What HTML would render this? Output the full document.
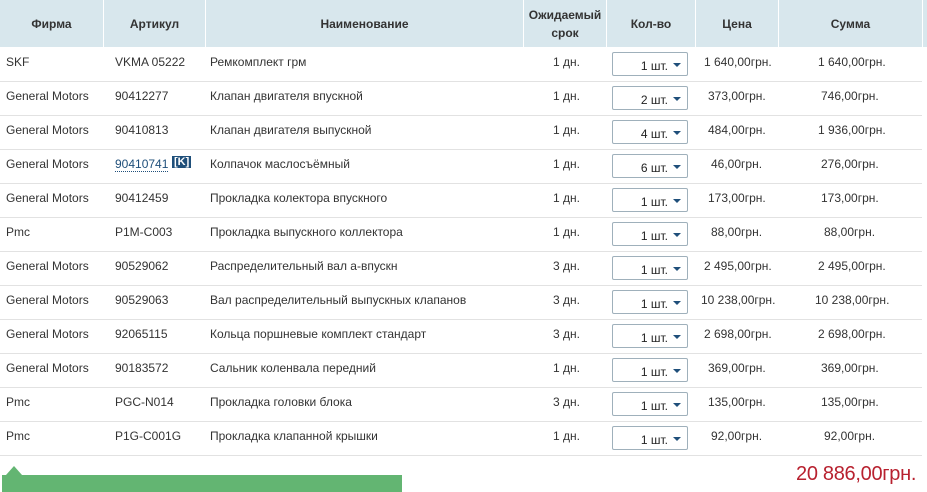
<!DOCTYPE html>
<html><head><meta charset="utf-8"><style>
*{margin:0;padding:0;box-sizing:border-box}
body{width:927px;height:492px;background:#fff;font-family:"Liberation Sans",Arial,sans-serif;font-size:12px;color:#333;position:relative;overflow:hidden}
.hdr{position:absolute;left:0;top:0;width:927px;height:47px;background:#d8e7ed}
.hc{position:absolute;top:0;height:47px;display:flex;align-items:center;justify-content:center;text-align:center;font-weight:bold;color:#333;line-height:18px;border-right:1px solid #fff}
.row{position:absolute;left:0;width:922px;height:34px;border-bottom:1px solid #e2e2e2}
.c{position:absolute;top:7px;white-space:nowrap}
.sel{position:absolute;left:612px;top:4px;width:76px;height:24px;border:1px solid #9fb0bb;border-radius:2px;background:#fff}
.sel span{position:absolute;right:19px;top:6px;color:#222}
.sel i{position:absolute;right:6px;top:10px;width:0;height:0;border-left:4px solid transparent;border-right:4px solid transparent;border-top:4px solid #1f4f7a}
</style></head><body>
<div class="hdr">
<div class="hc" style="left:0;width:104px">Фирма</div>
<div class="hc" style="left:104px;width:102px">Артикул</div>
<div class="hc" style="left:206px;width:318px">Наименование</div>
<div class="hc" style="left:524px;width:83px">Ожидаемый<br>срок</div>
<div class="hc" style="left:607px;width:89px">Кол-во</div>
<div class="hc" style="left:696px;width:83px">Цена</div>
<div class="hc" style="left:779px;width:144px">Сумма</div>
</div>
<div class="row" style="top:48px"><span class="c" style="left:6px">SKF</span><span class="c" style="left:115px">VKMA 05222</span><span class="c" style="left:210px">Ремкомплект грм</span><span class="c" style="left:553px">1 дн.</span><div class="sel"><span>1 шт.</span><i></i></div><span class="c" style="left:704px">1 640,00грн.</span><span class="c" style="left:818px">1 640,00грн.</span></div>
<div class="row" style="top:82px"><span class="c" style="left:6px">General Motors</span><span class="c" style="left:115px">90412277</span><span class="c" style="left:210px">Клапан двигателя впускной</span><span class="c" style="left:553px">1 дн.</span><div class="sel"><span>2 шт.</span><i></i></div><span class="c" style="left:708px">373,00грн.</span><span class="c" style="left:821px">746,00грн.</span></div>
<div class="row" style="top:116px"><span class="c" style="left:6px">General Motors</span><span class="c" style="left:115px">90410813</span><span class="c" style="left:210px">Клапан двигателя выпускной</span><span class="c" style="left:553px">1 дн.</span><div class="sel"><span>4 шт.</span><i></i></div><span class="c" style="left:708px">484,00грн.</span><span class="c" style="left:818px">1 936,00грн.</span></div>
<div class="row" style="top:150px"><span class="c" style="left:6px">General Motors</span><span class="c" style="left:115px;border-bottom:1px dotted #1f4f7a;color:#1f4f7a">90410741</span><span class="c" style="left:172px;top:6px;background:#1f4f7a;color:#fff;font-weight:bold;padding:0 2px;font-size:11px">[K]</span><span class="c" style="left:210px">Колпачок маслосъёмный</span><span class="c" style="left:553px">1 дн.</span><div class="sel"><span>6 шт.</span><i></i></div><span class="c" style="left:711px">46,00грн.</span><span class="c" style="left:821px">276,00грн.</span></div>
<div class="row" style="top:184px"><span class="c" style="left:6px">General Motors</span><span class="c" style="left:115px">90412459</span><span class="c" style="left:210px">Прокладка колектора впускного</span><span class="c" style="left:553px">1 дн.</span><div class="sel"><span>1 шт.</span><i></i></div><span class="c" style="left:708px">173,00грн.</span><span class="c" style="left:821px">173,00грн.</span></div>
<div class="row" style="top:218px"><span class="c" style="left:6px">Pmc</span><span class="c" style="left:115px">P1M-C003</span><span class="c" style="left:210px">Прокладка выпускного коллектора</span><span class="c" style="left:553px">1 дн.</span><div class="sel"><span>1 шт.</span><i></i></div><span class="c" style="left:711px">88,00грн.</span><span class="c" style="left:824px">88,00грн.</span></div>
<div class="row" style="top:252px"><span class="c" style="left:6px">General Motors</span><span class="c" style="left:115px">90529062</span><span class="c" style="left:210px">Распределительный вал а-впускн</span><span class="c" style="left:553px">3 дн.</span><div class="sel"><span>1 шт.</span><i></i></div><span class="c" style="left:704px">2 495,00грн.</span><span class="c" style="left:818px">2 495,00грн.</span></div>
<div class="row" style="top:286px"><span class="c" style="left:6px">General Motors</span><span class="c" style="left:115px">90529063</span><span class="c" style="left:210px">Вал распределительный выпускных клапанов</span><span class="c" style="left:553px">3 дн.</span><div class="sel"><span>1 шт.</span><i></i></div><span class="c" style="left:701px">10 238,00грн.</span><span class="c" style="left:815px">10 238,00грн.</span></div>
<div class="row" style="top:320px"><span class="c" style="left:6px">General Motors</span><span class="c" style="left:115px">92065115</span><span class="c" style="left:210px">Кольца поршневые комплект стандарт</span><span class="c" style="left:553px">3 дн.</span><div class="sel"><span>1 шт.</span><i></i></div><span class="c" style="left:704px">2 698,00грн.</span><span class="c" style="left:818px">2 698,00грн.</span></div>
<div class="row" style="top:354px"><span class="c" style="left:6px">General Motors</span><span class="c" style="left:115px">90183572</span><span class="c" style="left:210px">Сальник коленвала передний</span><span class="c" style="left:553px">1 дн.</span><div class="sel"><span>1 шт.</span><i></i></div><span class="c" style="left:708px">369,00грн.</span><span class="c" style="left:821px">369,00грн.</span></div>
<div class="row" style="top:388px"><span class="c" style="left:6px">Pmc</span><span class="c" style="left:115px">PGC-N014</span><span class="c" style="left:210px">Прокладка головки блока</span><span class="c" style="left:553px">3 дн.</span><div class="sel"><span>1 шт.</span><i></i></div><span class="c" style="left:708px">135,00грн.</span><span class="c" style="left:821px">135,00грн.</span></div>
<div class="row" style="top:422px"><span class="c" style="left:6px">Pmc</span><span class="c" style="left:115px">P1G-C001G</span><span class="c" style="left:210px">Прокладка клапанной крышки</span><span class="c" style="left:553px">1 дн.</span><div class="sel"><span>1 шт.</span><i></i></div><span class="c" style="left:711px">92,00грн.</span><span class="c" style="left:824px">92,00грн.</span></div>
<div style="position:absolute;left:2px;top:475px;width:400px;height:17px;background:#63b572"></div>
<div style="position:absolute;left:6px;top:466px;width:0;height:0;border-left:8px solid transparent;border-right:8px solid transparent;border-bottom:9px solid #63b572"></div>
<div style="position:absolute;left:796px;top:463px;color:#b8212f;font-size:20px;letter-spacing:-0.3px;white-space:nowrap">20 886,00грн.</div>
</body></html>
